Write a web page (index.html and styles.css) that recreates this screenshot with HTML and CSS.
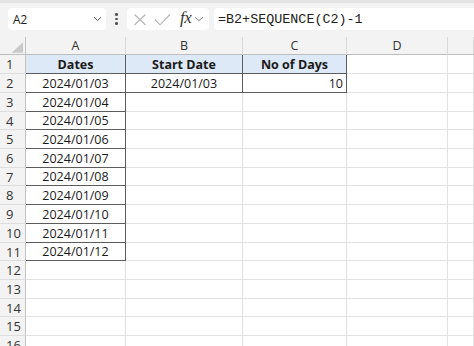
FILE: index.html
```html
<!DOCTYPE html>
<html>
<head>
<meta charset="utf-8">
<link rel="stylesheet" href="styles.css">
</head>
<body>
<div class="toolbar">
  <div class="box namebox">
    <span class="ref">A2</span>
    <svg class="chev" width="9" height="6" viewBox="0 0 9 6"><path d="M1 1.2 L4.5 4.6 L8 1.2" fill="none" stroke="#555" stroke-width="1"/></svg>
  </div>
  <div class="dots"><span></span><span></span><span></span></div>
  <div class="box fxbox">
    <svg class="ico" width="14" height="13" viewBox="0 0 14 13"><path d="M1.5 1.5 L12.5 12 M12.5 1.5 L1.5 12" fill="none" stroke="#b4b4b4" stroke-width="1.1"/></svg>
    <svg class="ico" width="17" height="13" viewBox="0 0 17 13"><path d="M1 6.5 L6 11.8 L16 1.5" fill="none" stroke="#b4b4b4" stroke-width="1.1"/></svg>
    <span class="fx">fx</span>
    <svg class="chev2" width="10" height="6" viewBox="0 0 10 6"><path d="M1 1.2 L5 4.6 L9 1.2" fill="none" stroke="#888" stroke-width="1"/></svg>
  </div>
  <div class="box formula">=B2+SEQUENCE(C2)-1</div>
</div>

<div class="sheet">
  <div class="r">
    <div class="corner"><svg width="26" height="18" viewBox="0 0 26 18"><path d="M24 5 L24 16 L12 16 Z" fill="#c9c9c9"/></svg></div>
    <div class="ch">A</div><div class="ch">B</div><div class="ch">C</div><div class="ch">D</div><div class="ch last"></div>
  </div>
  <div class="r">
    <div class="rh">1</div>
    <div class="c bd hd ctr">Dates</div><div class="c bd hd ctr">Start Date</div><div class="c bd hd ctr">No of Days</div><div class="c"></div><div class="c"></div>
  </div>
  <div class="r">
    <div class="rh">2</div>
    <div class="c bd ctr">2024/01/03</div><div class="c bd ctr">2024/01/03</div><div class="c bd num">10</div><div class="c"></div><div class="c"></div>
  </div>
  <div class="r">
    <div class="rh">3</div>
    <div class="c bd ctr">2024/01/04</div><div class="c"></div><div class="c"></div><div class="c"></div><div class="c"></div>
  </div>
  <div class="r">
    <div class="rh">4</div>
    <div class="c bd ctr">2024/01/05</div><div class="c"></div><div class="c"></div><div class="c"></div><div class="c"></div>
  </div>
  <div class="r">
    <div class="rh">5</div>
    <div class="c bd ctr">2024/01/06</div><div class="c"></div><div class="c"></div><div class="c"></div><div class="c"></div>
  </div>
  <div class="r">
    <div class="rh">6</div>
    <div class="c bd ctr">2024/01/07</div><div class="c"></div><div class="c"></div><div class="c"></div><div class="c"></div>
  </div>
  <div class="r">
    <div class="rh">7</div>
    <div class="c bd ctr">2024/01/08</div><div class="c"></div><div class="c"></div><div class="c"></div><div class="c"></div>
  </div>
  <div class="r">
    <div class="rh">8</div>
    <div class="c bd ctr">2024/01/09</div><div class="c"></div><div class="c"></div><div class="c"></div><div class="c"></div>
  </div>
  <div class="r">
    <div class="rh">9</div>
    <div class="c bd ctr">2024/01/10</div><div class="c"></div><div class="c"></div><div class="c"></div><div class="c"></div>
  </div>
  <div class="r">
    <div class="rh">10</div>
    <div class="c bd ctr">2024/01/11</div><div class="c"></div><div class="c"></div><div class="c"></div><div class="c"></div>
  </div>
  <div class="r">
    <div class="rh">11</div>
    <div class="c bd ctr">2024/01/12</div><div class="c"></div><div class="c"></div><div class="c"></div><div class="c"></div>
  </div>
  <div class="r">
    <div class="rh">12</div>
    <div class="c"></div><div class="c"></div><div class="c"></div><div class="c"></div><div class="c"></div>
  </div>
  <div class="r">
    <div class="rh">13</div>
    <div class="c"></div><div class="c"></div><div class="c"></div><div class="c"></div><div class="c"></div>
  </div>
  <div class="r">
    <div class="rh">14</div>
    <div class="c"></div><div class="c"></div><div class="c"></div><div class="c"></div><div class="c"></div>
  </div>
  <div class="r">
    <div class="rh">15</div>
    <div class="c"></div><div class="c"></div><div class="c"></div><div class="c"></div><div class="c"></div>
  </div>
  <div class="r">
    <div class="rh">16</div>
    <div class="c"></div><div class="c"></div><div class="c"></div><div class="c"></div><div class="c"></div>
  </div>
</div>
</body>
</html>
```

FILE: styles.css
```css
html, body {
  margin: 0;
  padding: 0;
}
body {
  width: 474px;
  height: 346px;
  overflow: hidden;
  background: #fff;
  font-family: "Open Sans", "Noto Sans", sans-serif;
  color: #1f1f1f;
}

/* ---------- formula toolbar ---------- */
.toolbar {
  height: 37px;
  box-sizing: border-box;
  background: #f3f3f3;
  border-top: 3px solid #e4e4e4;
  padding: 5px 0 0 8px;
  display: flex;
  align-items: flex-start;
}
.box {
  height: 22px;
  box-sizing: border-box;
  background: #fff;
  border-radius: 4px;
  display: flex;
  align-items: center;
}
.namebox {
  width: 98px;
  padding: 0 4px 0 5px;
  justify-content: space-between;
}
.ref {
  font-size: 11.8px;
  color: #222;
}
.dots {
  width: 21px;
  height: 22px;
  display: flex;
  flex-direction: column;
  align-items: center;
  justify-content: center;
  gap: 2px;
}
.dots span {
  width: 2.4px;
  height: 2.4px;
  border-radius: 50%;
  background: #555;
}
.fxbox {
  width: 82px;
  padding-left: 6px;
}
.fxbox .ico { margin-right: 7px; }
.fxbox .ico + .ico { margin-right: 9px; }
.fx {
  font-family: "Liberation Serif", "DejaVu Serif", serif;
  font-style: italic;
  font-size: 17px;
  color: #333;
  line-height: 1;
  margin-top: -3px;
  letter-spacing: -0.5px;
}
.chev2 { margin-left: 3px; }
.formula {
  margin-left: 5px;
  flex: 1;
  min-width: 0;
  border-radius: 4px 0 0 4px;
  padding-left: 4px;
  white-space: nowrap;
  overflow: hidden;
  font-family: "Liberation Mono", "DejaVu Sans Mono", monospace;
  font-size: 13.4px;
  color: #222;
}

/* ---------- grid ---------- */
.sheet {
  display: grid;
  grid-template-columns: 26px 100px 117px 104px 101px 1fr;
  grid-template-rows: 18px 19px 19px 19px 18px 19px 19px 18px 19px 19px 19px 18px 19px 19px 18px 19px 19px;
}
.r { display: contents; }
.corner, .ch, .rh, .c {
  box-sizing: border-box;
  display: flex;
  align-items: center;
  font-size: 12.5px;
  min-width: 0;
  overflow: hidden;
}
.corner {
  background: #f3f3f3;
  border-right: 1px solid #c4c4c4;
  border-bottom: 1px solid #bdbdbd;
}
.ch {
  background: #f3f3f3;
  border-right: 1px solid #d9d9d9;
  border-bottom: 1px solid #bdbdbd;
  justify-content: center;
  color: #333;
}
.rh {
  background: #f3f3f3;
  border-right: 1px solid #c4c4c4;
  border-bottom: 1px solid #dedede;
  padding-left: 6px;
  font-size: 13px;
  color: #333;
}
.c {
  border-right: 1px solid #e2e2e2;
  border-bottom: 1px solid #e2e2e2;
  color: #1a1a1a;
}
.c.bd {
  border-right-color: #5c5c5c;
  border-bottom-color: #5c5c5c;
}
.hd {
  background: #dde9f6;
  font-weight: 700;
}
.ctr { justify-content: center; }
.num {
  justify-content: flex-end;
  padding-right: 3px;
}
```
